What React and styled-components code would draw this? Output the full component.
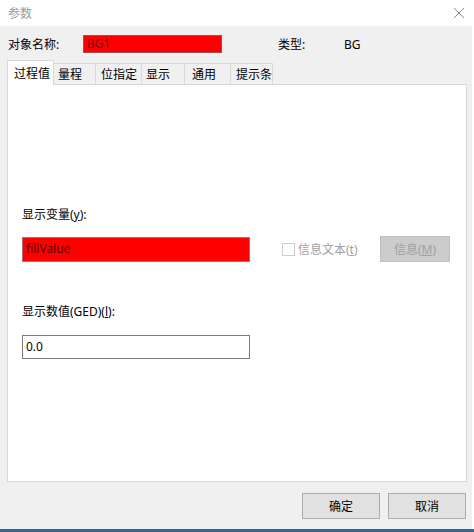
import React from "react";
import styled, { createGlobalStyle } from "styled-components";

const GlobalStyle = createGlobalStyle`
  html, body {
    margin: 0;
    padding: 0;
    background: #ffffff;
  }
  body {
    font-family: "Noto Sans", "Noto Sans CJK SC", sans-serif;
    font-size: 12px;
    color: #000;
  }
`;

const tabs = [
  { label: "过程值", width: 47, pad: 6 },
  { label: "量程", width: 42, pad: 4 },
  { label: "位指定", width: 46, pad: 5 },
  { label: "显示", width: 43, pad: 4 },
  { label: "通用", width: 46, pad: 7 },
  { label: "提示条", width: 42, pad: 5 },
];

export default function App() {
  return (
    <>
      <GlobalStyle />
      <Window>
        <TitleBar>
          <Title>参数</Title>
          <CloseButton>
            <svg width="12" height="12" viewBox="0 0 12 12">
              <path d="M1 1 L11 11 M11 1 L1 11" stroke="#8a8a8a" strokeWidth="1" fill="none" />
            </svg>
          </CloseButton>
        </TitleBar>

        <Body>
          <HeaderRow>
            <HeaderLabel>对象名称:</HeaderLabel>
            <NameBox>BG1</NameBox>
            <TypeLabel>类型:</TypeLabel>
            <span>BG</span>
          </HeaderRow>

          <TabBar>
            {tabs.map((t, i) => (
              <Tab key={t.label} $active={i === 0} $width={t.width} $pad={t.pad}>
                {t.label}
              </Tab>
            ))}
          </TabBar>

          <Panel>
            <FieldLabel>
              显示变量(<u>y</u>):
            </FieldLabel>
            <InputRow>
              <TextBox $red>fillValue</TextBox>
              <CheckOption>
                <CheckBox />
                <span>
                  信息文本(<u>t</u>)
                </span>
              </CheckOption>
              <InfoButton disabled>
                信息(<u>M</u>)
              </InfoButton>
            </InputRow>

            <FieldLabel $top={42}>
              显示数值(GED)(<u>l</u>):
            </FieldLabel>
            <InputRow $top={15}>
              <TextBox>0.0</TextBox>
            </InputRow>
          </Panel>

          <Footer>
            <DialogButton>确定</DialogButton>
            <DialogButton>取消</DialogButton>
          </Footer>
        </Body>
      </Window>
    </>
  );
}

const Window = styled.div`
  width: 474px;
  height: 532px;
  display: flex;
  flex-direction: column;
  background: #ffffff;
  border-bottom: 3px solid #2f66a3;
  box-sizing: border-box;
`;

const TitleBar = styled.div`
  height: 26px;
  display: flex;
  align-items: center;
  justify-content: space-between;
  padding: 0 8px;
  background: #ffffff;
`;

const Title = styled.span`
  color: #9a9a9a;
  font-size: 12px;
`;

const CloseButton = styled.span`
  display: flex;
  align-items: center;
  margin-right: 1px;
`;

const Body = styled.div`
  flex: 1;
  display: flex;
  flex-direction: column;
  background: #f0f0f0;
  margin-right: 2px;
  padding: 9px 5px 0 7px;
`;

const HeaderRow = styled.div`
  height: 18px;
  display: flex;
  align-items: center;
  padding-left: 1px;
`;

const HeaderLabel = styled.span`
  width: 75px;
`;

const NameBox = styled.div`
  width: 139px;
  height: 18px;
  box-sizing: border-box;
  background: #ff0000;
  border: 1px solid #a05050;
  color: #6a0000;
  padding-left: 3px;
  line-height: 16px;
`;

const TypeLabel = styled.span`
  margin-left: 56px;
  width: 66px;
`;

const TabBar = styled.div`
  display: flex;
  align-items: flex-end;
  height: 24px;
  margin-top: 8px;
  margin-bottom: -1px;
  position: relative;
  z-index: 1;
`;

const Tab = styled.div`
  width: ${(p) => p.$width}px;
  height: ${(p) => (p.$active ? 25 : 22)}px;
  box-sizing: border-box;
  display: flex;
  align-items: center;
  padding-left: ${(p) => p.$pad}px;
  background: ${(p) => (p.$active ? "#ffffff" : "#f0f0f0")};
  border: 1px solid #d9d9d9;
  border-left: ${(p) => (p.$active ? "1px solid #d9d9d9" : "none")};
  border-bottom: ${(p) => (p.$active ? "none" : "1px solid #d9d9d9")};
`;

const Panel = styled.div`
  height: 398px;
  box-sizing: border-box;
  background: #ffffff;
  border: 1px solid #d9d9d9;
  padding: 122px 0 0 14px;
  display: flex;
  flex-direction: column;
`;

const FieldLabel = styled.div`
  line-height: 16px;
  margin-top: ${(p) => p.$top || 0}px;
`;

const InputRow = styled.div`
  display: flex;
  align-items: center;
  margin-top: ${(p) => p.$top || 13}px;
`;

const TextBox = styled.div`
  width: 228px;
  height: ${(p) => (p.$red ? 25 : 24)}px;
  box-sizing: border-box;
  border: 1px solid ${(p) => (p.$red ? "#b07070" : "#7a7a7a")};
  background: ${(p) => (p.$red ? "#ff0000" : "#ffffff")};
  color: ${(p) => (p.$red ? "#5a0000" : "#000000")};
  padding-left: 3px;
  line-height: 22px;
`;

const CheckOption = styled.label`
  display: flex;
  align-items: center;
  gap: 3px;
  width: 98px;
  margin-left: 32px;
  color: #a0a0a0;
`;

const CheckBox = styled.span`
  width: 13px;
  height: 13px;
  box-sizing: border-box;
  border: 1px solid #cccccc;
  background: #ffffff;
`;

const InfoButton = styled.button`
  width: 70px;
  height: 26px;
  box-sizing: border-box;
  background: #cccccc;
  border: 1px solid #bfbfbf;
  color: #a0a0a0;
  font: inherit;
  padding: 0;
`;

const Footer = styled.div`
  display: flex;
  justify-content: flex-end;
  gap: 8px;
  padding-top: 11px;
  padding-right: 1px;
`;

const DialogButton = styled.button`
  width: 78px;
  height: 26px;
  box-sizing: border-box;
  background: #e1e1e1;
  border: 1px solid #adadad;
  font: inherit;
  color: #000;
  padding: 0;
`;
